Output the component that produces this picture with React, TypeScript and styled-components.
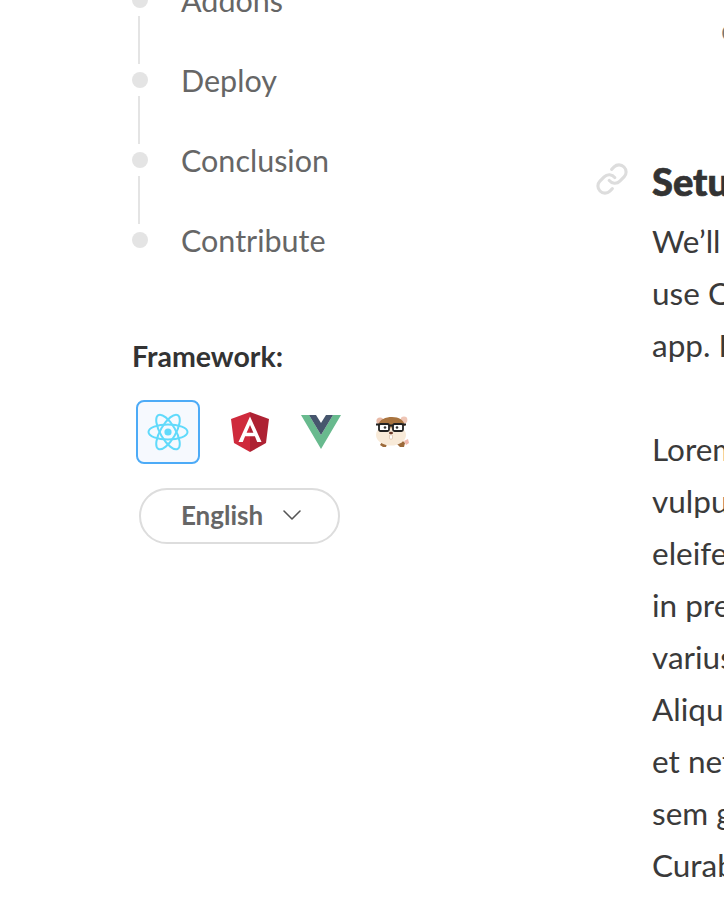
import styled, { createGlobalStyle } from 'styled-components';
import { ChevronDown, Link } from 'lucide-react';

const GlobalStyle = createGlobalStyle`
  html, body {
    margin: 0;
    padding: 0;
    height: 898px;
    overflow: hidden;
    background: #fff;
  }
  body {
    font-family: "Lato", "Noto Sans", sans-serif;
  }
`;

const Page = styled.div`
  display: flex;
  width: 724px;
  height: 898px;
  overflow: hidden;
`;

const Sidebar = styled.aside`
  flex: 0 0 652px;
  box-sizing: border-box;
  margin-top: -8px;
  padding-left: 132px;
`;

const StepList = styled.ul`
  list-style: none;
  margin: 0;
  padding: 0;
`;

const Step = styled.li`
  display: flex;
`;

const Rail = styled.div`
  flex: 0 0 16px;
  display: flex;
  flex-direction: column;
`;

const Dot = styled.span`
  width: 16px;
  height: 16px;
  border-radius: 50%;
  background: #e4e4e4;
`;

const Connector = styled.span`
  width: 2px;
  height: 48px;
  margin: 8px 0 8px 6px;
  background: #e4e4e4;
`;

const StepLabel = styled.span`
  margin-left: 33px;
  font-size: 30.5px;
  line-height: 16px;
  color: #666;
  white-space: nowrap;
`;

const FrameworkLabel = styled.div`
  margin-top: 90px;
  font-size: 28.5px;
  font-weight: 700;
  line-height: 36px;
  color: #333;
`;

const FrameworkRow = styled.div`
  display: flex;
  gap: 7px;
  margin: 26px 0 0 4px;
`;

const FrameworkButton = styled.button<{ $active?: boolean }>`
  display: flex;
  align-items: center;
  justify-content: center;
  width: 64px;
  height: 64px;
  box-sizing: border-box;
  padding: 0;
  margin-right: ${({ $active }) => ($active ? '11px' : '0')};
  border: 2px solid ${({ $active }) => ($active ? '#4dabf7' : 'transparent')};
  border-radius: 8px;
  background: ${({ $active }) => ($active ? '#f6f9fe' : 'transparent')};
`;

const LanguageButton = styled.button`
  display: flex;
  align-items: center;
  justify-content: center;
  gap: 13px;
  width: 201px;
  height: 56px;
  box-sizing: border-box;
  margin: 24px 0 0 7px;
  padding: 0 0 2px 10px;
  border: 2px solid #ddd;
  border-radius: 28px;
  background: #fff;
  font-family: inherit;
  font-size: 26px;
  font-weight: 700;
  color: #666;
`;

const Main = styled.main`
  flex: 1;
  min-width: 0;
`;

const TopNote = styled.div`
  margin-top: 3px;
  padding-left: 69px;
  font-size: 31.5px;
  line-height: 52px;
  color: #777;
  white-space: nowrap;
`;

const Heading = styled.h2`
  position: relative;
  margin: 100px 0 8px;
  font-size: 38px;
  font-weight: 900;
  line-height: 52px;
  color: #333;
  white-space: nowrap;
  -webkit-text-stroke: 0.7px #333;
`;

const Anchor = styled.span`
  position: absolute;
  left: -57px;
  top: 7px;
  display: flex;
  color: #ddd;
  -webkit-text-stroke: 0;
`;

const Paragraph = styled.p`
  margin: 0 0 52px;
`;

const Line = styled.span`
  display: block;
  font-size: 31.5px;
  line-height: 52px;
  color: #3a3a3a;
  white-space: nowrap;
`;

const ReactLogo = () => (
  <svg width="42" height="38" viewBox="-21 -19 42 38" fill="none" stroke="#61dafb" strokeWidth="2">
    <ellipse rx="19.5" ry="7.6" />
    <ellipse rx="19.5" ry="7.6" transform="rotate(60)" />
    <ellipse rx="19.5" ry="7.6" transform="rotate(120)" />
    <circle r="3.6" fill="#61dafb" stroke="none" />
  </svg>
);

const AngularLogo = () => (
  <svg width="38" height="40" viewBox="0 0 38 40">
    <polygon points="19,0 0,7 3,31 19,40" fill="#cf2a3c" />
    <polygon points="19,0 38,7 35,31 19,40" fill="#ae2233" />
    <path d="M19 4.5 L7.5 30 H11.8 L14.1 24.3 H23.9 L26.2 30 H30.5 Z M19 13 L22.4 20.8 H15.6 Z" fill="#fff" fillRule="evenodd" />
  </svg>
);

const VueLogo = () => (
  <svg width="40" height="34" viewBox="0 0 40 34">
    <polygon points="0,0 8,0 20,20 32,0 40,0 20,34" fill="#68ba8e" />
    <polygon points="8,0 15,0 20,8 25,0 32,0 20,20" fill="#46566d" />
  </svg>
);

const HamsterLogo = () => (
  <svg width="34" height="32" viewBox="0 0 34 32">
    <circle cx="5" cy="5" r="3.6" fill="#e8b9a6" />
    <circle cx="29" cy="4" r="3.4" fill="#efc6b6" />
    <path d="M29 25 l4 -2 l1 4 l-3 2 Z" fill="#f0b9ae" />
    <path d="M5 29 L8 31 H11 L12 28 H22 L25 31 H29 L30 27 L27 24 H8 Z" fill="#9c6a3a" />
    <ellipse cx="16" cy="19" rx="15" ry="10.5" fill="#f8ead8" />
    <path d="M3 10 C4 3 11 1 17 1 C24 1 29 4 30 10 L18 8 L16 13 L14 8 Z" fill="#a9743f" />
    <rect x="4" y="8" width="10" height="7" rx="1.5" fill="#fff" stroke="#222" strokeWidth="1.8" />
    <rect x="18" y="8" width="10" height="7" rx="1.5" fill="#fff" stroke="#222" strokeWidth="1.8" />
    <path d="M1 8.5 H4 M14 9.5 H18 M28 8.5 H31" stroke="#222" strokeWidth="1.8" fill="none" />
    <circle cx="10" cy="11.5" r="1.3" fill="#333" />
    <circle cx="22" cy="11.5" r="1.3" fill="#333" />
    <ellipse cx="16" cy="17" rx="2" ry="1.2" fill="#6b3a2a" />
    <rect x="14.5" y="19" width="3" height="4" rx="0.6" fill="#fff" stroke="#c9a58a" strokeWidth="0.5" />
  </svg>
);

const steps = ['Addons', 'Deploy', 'Conclusion', 'Contribute'];

const intro = [
  'We\u2019ll start by setting up the project. We will',
  'use Create React App to scaffold a brand new',
  'app. Let\u2019s get started.',
];

const lorem = [
  'Lorem ipsum dolor sit amet, consectetur',
  'vulputate adipiscing elit. Nullam sit amet',
  'eleifend mauris, at pretium lectus. Aenean',
  'in pretium neque. Sed rutrum augue nec',
  'varius dictum. Vestibulum ac ipsum nunc.',
  'Aliquam erat volutpat. Pellentesque habitant',
  'et netus et malesuada fames ac turpis.',
  'sem gravida, vitae fermentum ligula luctus.',
  'Curabitur non mi sed nisl sagittis tempus.',
];

export default function App() {
  return (
    <Page>
      <GlobalStyle />
      <Sidebar>
        <StepList>
          {steps.map((step, index) => (
            <Step key={step}>
              <Rail>
                <Dot />
                {index < steps.length - 1 && <Connector />}
              </Rail>
              <StepLabel>{step}</StepLabel>
            </Step>
          ))}
        </StepList>
        <FrameworkLabel>Framework:</FrameworkLabel>
        <FrameworkRow>
          <FrameworkButton $active aria-label="React">
            <ReactLogo />
          </FrameworkButton>
          <FrameworkButton aria-label="Angular">
            <AngularLogo />
          </FrameworkButton>
          <FrameworkButton aria-label="Vue">
            <VueLogo />
          </FrameworkButton>
          <FrameworkButton aria-label="Other">
            <HamsterLogo />
          </FrameworkButton>
        </FrameworkRow>
        <LanguageButton>
          English
          <ChevronDown size={32} strokeWidth={1.2} color="#555" />
        </LanguageButton>
      </Sidebar>
      <Main>
        <TopNote>code</TopNote>
        <Heading>
          <Anchor>
            <Link size={34} strokeWidth={2.2} />
          </Anchor>
          Setup
        </Heading>
        <Paragraph>
          {intro.map((line) => (
            <Line key={line}>{line}</Line>
          ))}
        </Paragraph>
        <Paragraph>
          {lorem.map((line) => (
            <Line key={line}>{line}</Line>
          ))}
        </Paragraph>
      </Main>
    </Page>
  );
}
